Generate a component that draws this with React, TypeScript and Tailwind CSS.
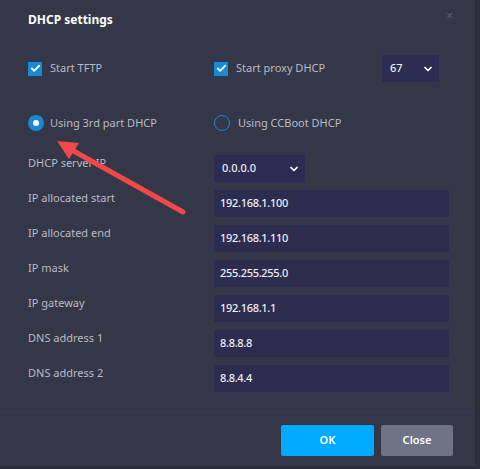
import { ChevronDown, Check } from 'lucide-react';

const font = { fontFamily: '"Noto Sans", "Open Sans", sans-serif' };

const rows: { label: string; value: string; select?: boolean }[] = [
  { label: 'DHCP server IP', value: '0.0.0.0', select: true },
  { label: 'IP allocated start', value: '192.168.1.100' },
  { label: 'IP allocated end', value: '192.168.1.110' },
  { label: 'IP mask', value: '255.255.255.0' },
  { label: 'IP gateway', value: '192.168.1.1' },
  { label: 'DNS address 1', value: '8.8.8.8' },
  { label: 'DNS address 2', value: '8.8.4.4' }
];

function CheckBox() {
  return (
    <span className="w-[14px] h-[14px] bg-[#1789d6] flex items-center justify-center shrink-0">
      <Check size={11} strokeWidth={4} color="#ffffff" />
    </span>
  );
}

export default function App() {
  return (
    <div className="w-[480px] h-[469px] bg-[#2b2e3b]" style={font}>
      <div className="relative w-[475px] h-[466px] bg-[#333747] flex flex-col">
        {/* header */}
        <div className="flex justify-between items-start pt-[12px] pl-[28px] pr-[22px]">
          <h3 className="text-[12px] leading-[16px] font-bold text-white">DHCP settings</h3>
          <span className="text-[12px] leading-[12px] text-[#5d6174] -mt-[2px]">×</span>
        </div>

        {/* checkboxes */}
        <div className="flex items-center mt-[27px] pl-[28px] h-[27px]">
          <label className="w-[186px] flex items-center gap-[8px]">
            <CheckBox />
            <span className="text-[11px] text-[#b9bbc6]">Start TFTP</span>
          </label>
          <label className="w-[168px] flex items-center gap-[8px]">
            <CheckBox />
            <span className="text-[11px] text-[#b9bbc6]">Start proxy DHCP</span>
          </label>
          <div className="w-[57px] h-[27px] bg-[#2c2c52] flex items-center justify-between pl-[8px] pr-[5px]">
            <span className="text-[11px] font-medium text-[#eceef6]">67</span>
            <ChevronDown size={12} strokeWidth={3.5} color="#ffffff" />
          </div>
        </div>

        {/* radios */}
        <div className="flex items-center mt-[33px] pl-[28px] h-[16px]">
          <label className="w-[186px] flex items-center gap-[6px]">
            <span className="w-[16px] h-[16px] rounded-full bg-[#1789d6] flex items-center justify-center">
              <span className="w-[6px] h-[6px] rounded-full bg-white" />
            </span>
            <span className="text-[11px] text-[#b9bbc6]">Using 3rd part DHCP</span>
          </label>
          <label className="flex items-center gap-[8px]">
            <span className="w-[16px] h-[16px] rounded-full border-[1.5px] border-[#1789d6]" />
            <span className="text-[11px] text-[#b9bbc6]">Using CCBoot DHCP</span>
          </label>
        </div>

        {/* form */}
        <div className="flex flex-col gap-[8px] mt-[24px] pl-[28px]">
          {rows.map((r) => (
            <div key={r.label} className="flex items-start">
              <span className="w-[186px] pt-[1px] text-[11px] leading-[14px] text-[#b9bbc6]">{r.label}</span>
              {r.select ? (
                <div className="w-[91px] h-[27px] bg-[#2c2c52] flex items-center justify-between pl-[8px] pr-[5px]">
                  <span className="text-[11px] font-medium text-[#eceef6]">{r.value}</span>
                  <ChevronDown size={12} strokeWidth={3.5} color="#ffffff" />
                </div>
              ) : (
                <div className="w-[235px] h-[27px] bg-[#2c2c4f] flex items-center pl-[6px]">
                  <span className="text-[11px] font-medium text-[#eceef6] tracking-[-0.3px]">{r.value}</span>
                </div>
              )}
            </div>
          ))}
        </div>

        <div className="mt-[20px] h-px bg-[#363a5e]" />

        {/* buttons */}
        <div className="flex justify-end gap-[7px] mt-[12px] pr-[22px]">
          <button className="w-[93px] h-[31px] rounded-[2px] bg-[#00aaff] text-white text-[11px] font-semibold">OK</button>
          <button className="w-[72px] h-[31px] rounded-[2px] bg-[#6e7486] text-white text-[11px] font-semibold">Close</button>
        </div>

        {/* annotation arrow */}
        <svg className="absolute left-0 top-0 pointer-events-none" width="475" height="466">
          <line x1="183" y1="212" x2="70" y2="149" stroke="#f04848" strokeWidth="5" strokeLinecap="round" />
          <polygon points="57,141 79,143 69,159" fill="#f04848" />
        </svg>
      </div>
    </div>
  );
}
